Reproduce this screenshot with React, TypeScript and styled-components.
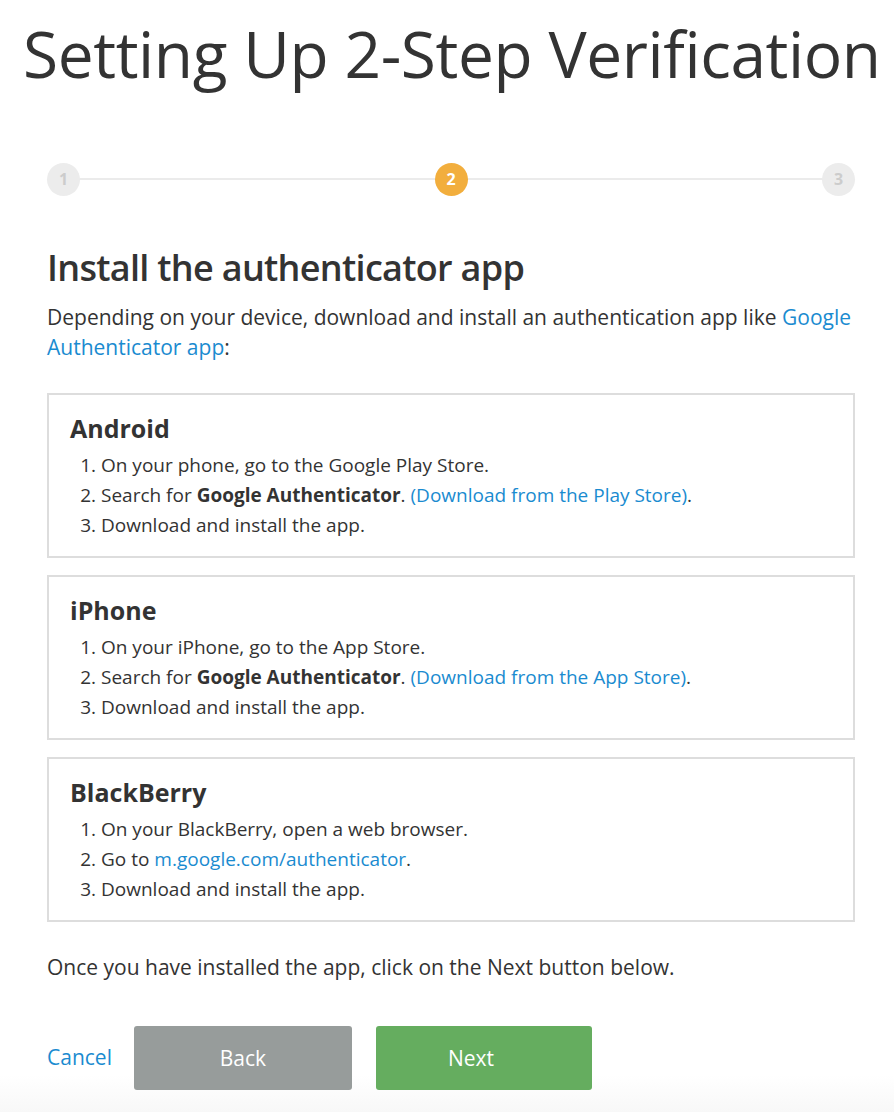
import styled, { createGlobalStyle } from 'styled-components';

const GlobalStyle = createGlobalStyle`
  html, body {
    margin: 0;
    padding: 0;
    background: #fff;
  }
  body {
    font-family: 'Open Sans', 'Noto Sans', sans-serif;
    color: #333;
  }
`;

const Page = styled.div`
  min-height: 1112px;
  background: linear-gradient(to bottom, #fff 0, #fff 1075px, #f8f8f8 1112px);
  overflow: hidden;
`;

const Title = styled.h1`
  margin: 0;
  padding: 16px 0 0 23px;
  font-size: 64px;
  line-height: 76px;
  font-weight: 400;
  white-space: nowrap;
  letter-spacing: -0.4px;
  color: #333;
`;

const Content = styled.div`
  margin: 0 39px 0 47px;
`;

const Stepper = styled.div`
  position: relative;
  display: flex;
  justify-content: space-between;
  align-items: center;
  margin-top: 70px;
  height: 34px;

  &::before {
    content: '';
    position: absolute;
    left: 16px;
    right: 16px;
    top: 16px;
    height: 2px;
    background: #ebebeb;
  }
`;

const StepDot = styled.div<{ $active?: boolean }>`
  position: relative;
  width: 33px;
  height: 33px;
  border-radius: 50%;
  display: flex;
  align-items: center;
  justify-content: center;
  background: ${(p) => (p.$active ? '#f2ae3d' : '#ececec')};
  color: ${(p) => (p.$active ? '#fff' : '#cccccc')};
  font-size: 16px;
  font-weight: 700;
`;

const Heading = styled.h2`
  margin: 50px 0 0;
  font-size: 36px;
  line-height: 44px;
  font-weight: 600;
  letter-spacing: -0.7px;
  color: #333;
`;

const Intro = styled.p`
  margin: 12px 0 0;
  font-size: 21px;
  line-height: 30px;
`;

const Link = styled.a`
  color: #1a8bd0;
  text-decoration: none;
`;

const Platforms = styled.div`
  display: flex;
  flex-direction: column;
  gap: 17px;
  margin-top: 31px;
`;

const PlatformBox = styled.div`
  border: 2px solid #dddddd;
  padding: 17px 21px 16px;
`;

const PlatformName = styled.h3`
  margin: 0;
  font-size: 25px;
  line-height: 32px;
  font-weight: 700;
  color: #333;
`;

const Steps = styled.ol`
  margin: 6px 0 0;
  padding-left: 31px;
  font-size: 19px;
  line-height: 30px;
  color: #333;
`;

const Outro = styled.p`
  margin: 30px 0 0;
  font-size: 21px;
  line-height: 30px;
`;

const Actions = styled.div`
  display: flex;
  align-items: center;
  gap: 24px;
  margin-top: 44px;
`;

const CancelLink = styled.a`
  font-size: 21px;
  color: #1a8bd0;
  text-decoration: none;
  margin-right: -2px;
  padding-bottom: 3px;
`;

const Button = styled.button<{ $variant: 'back' | 'next' }>`
  width: ${(p) => (p.$variant === 'back' ? '218px' : '216px')};
  height: 64px;
  padding: ${(p) => (p.$variant === 'back' ? '0' : '0 26px 0 0')};
  border: none;
  border-radius: 3px;
  font-family: inherit;
  font-size: 21px;
  color: #fff;
  background: ${(p) => (p.$variant === 'back' ? '#979c9b' : '#65ad5f')};
  cursor: pointer;
`;

export default function App() {
  return (
    <Page>
      <GlobalStyle />
      <Title>Setting Up 2-Step Verification</Title>
      <Content>
        <Stepper>
          <StepDot>1</StepDot>
          <StepDot $active>2</StepDot>
          <StepDot>3</StepDot>
        </Stepper>

        <Heading>Install the authenticator app</Heading>
        <Intro>
          Depending on your device, download and install an authentication app like{' '}
          <Link href="#">Google Authenticator app</Link>:
        </Intro>

        <Platforms>
          <PlatformBox>
            <PlatformName>Android</PlatformName>
            <Steps>
              <li>On your phone, go to the Google Play Store.</li>
              <li>
                Search for <b>Google Authenticator</b>.{' '}
                <Link href="#">(Download from the Play Store)</Link>.
              </li>
              <li>Download and install the app.</li>
            </Steps>
          </PlatformBox>
          <PlatformBox>
            <PlatformName>iPhone</PlatformName>
            <Steps>
              <li>On your iPhone, go to the App Store.</li>
              <li>
                Search for <b>Google Authenticator</b>.{' '}
                <Link href="#">(Download from the App Store)</Link>.
              </li>
              <li>Download and install the app.</li>
            </Steps>
          </PlatformBox>
          <PlatformBox>
            <PlatformName>BlackBerry</PlatformName>
            <Steps>
              <li>On your BlackBerry, open a web browser.</li>
              <li>
                Go to <Link href="#">m.google.com/authenticator</Link>.
              </li>
              <li>Download and install the app.</li>
            </Steps>
          </PlatformBox>
        </Platforms>

        <Outro>Once you have installed the app, click on the Next button below.</Outro>

        <Actions>
          <CancelLink href="#">Cancel</CancelLink>
          <Button $variant="back">Back</Button>
          <Button $variant="next">Next</Button>
        </Actions>
      </Content>
    </Page>
  );
}
